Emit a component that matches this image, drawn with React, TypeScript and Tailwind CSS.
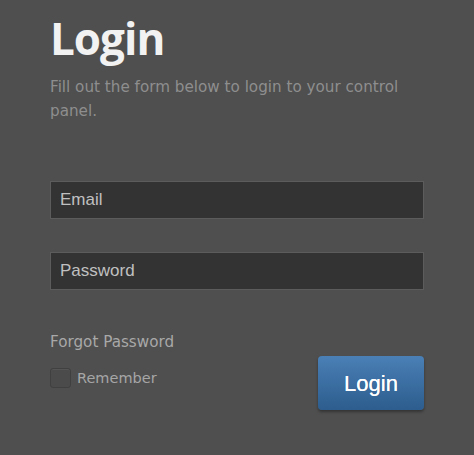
export default function App() {
  return (
    <div className="h-[455px] w-[474px] bg-[#4f4f4f] px-[50px] pt-[16px] font-['DejaVu_Sans',sans-serif]">
      <h1 className="font-['Open_Sans',sans-serif] text-[44px] font-bold leading-[44px] tracking-[-1px] text-[#f2f2f2]">
        Login
      </h1>
      <p className="mt-[15px] text-[15.2px] leading-[24px] text-[#8e8e8e]">
        Fill out the form below to login to your control panel.
      </p>

      {/* Fields */}
      <div className="mt-[58px] flex flex-col gap-[33px]">
        <input
          type="text"
          placeholder="Email"
          className="h-[38px] w-full border border-[#5c5c5c] bg-[#333333] px-[9px] font-['Liberation_Sans',Arial,sans-serif] text-[17px] text-[#c0c0c0] outline-none placeholder:text-[#c0c0c0]"
        />
        <input
          type="password"
          placeholder="Password"
          className="h-[38px] w-full border border-[#5c5c5c] bg-[#333333] px-[9px] font-['Liberation_Sans',Arial,sans-serif] text-[17px] text-[#c0c0c0] outline-none placeholder:text-[#c0c0c0]"
        />
      </div>

      <div className="mt-[42px] text-[15.2px] leading-[20px] text-[#a8a8a8]">Forgot Password</div>

      <div className="mt-[4px] flex items-start justify-between">
        <label className="mt-[12px] flex items-center gap-[6px]">
          <span className="h-[20px] w-[21px] rounded-[3px] border border-[#404040] bg-[#4b4b4b] shadow-[inset_0_1px_0_rgba(255,255,255,0.06)]" />
          <span className="text-[14.5px] leading-[20px] text-[#a6a6a6]">Remember</span>
        </label>
        <button className="h-[54px] w-[106px] rounded-[4px] bg-gradient-to-b from-[#4a80b6] to-[#2d5d8e] font-['Liberation_Sans',Arial,sans-serif] text-[22px] text-white shadow-[0_2px_3px_rgba(0,0,0,0.35)] [text-shadow:0_0_0.6px_#fff]">
          Login
        </button>
      </div>
    </div>
  );
}
